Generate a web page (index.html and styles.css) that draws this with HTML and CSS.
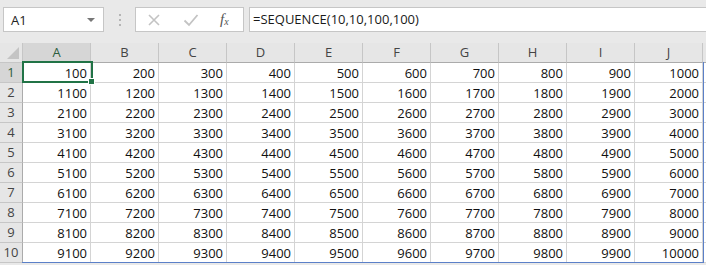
FILE: index.html
```html
<!DOCTYPE html>
<html>
<head>
<meta charset="utf-8">
<link rel="stylesheet" href="styles.css">
</head>
<body>
<div class="bar">
  <div class="namebox"><span class="nm">A1</span><span class="caret"></span></div>
  <div class="dots"><span></span><span></span><span></span></div>
  <div class="fxbox">
    <svg class="ic" width="14" height="14" viewBox="0 0 14 14"><path d="M2 2 L12 12 M12 2 L2 12" stroke="#c3c3c3" stroke-width="1.6" fill="none"/></svg>
    <svg class="ic" width="16" height="14" viewBox="0 0 16 14"><path d="M1.5 7.5 L6 12 L14.5 2" stroke="#c3c3c3" stroke-width="1.8" fill="none"/></svg>
    <span class="fx"><i>f</i><sub>x</sub></span>
  </div>
  <div class="formula">=SEQUENCE(10,10,100,100)</div>
</div>
<div class="sheet">
  <div id="grid" class="grid"></div>
  <div class="spill"></div>
  <div class="sel"><span class="handle"></span></div>
</div>
<script src="app.js"></script>
</body>
</html>
```
FILE: app.js
```js
const g = document.getElementById('grid');
const cols = 'ABCDEFGHIJ'.split('');
let h = '<div class="corner"><span class="tri"></span></div>';
cols.forEach((c, i) => { h += '<div class="ch' + (i === 0 ? ' on' : '') + '">' + c + '</div>'; });
h += '<div class="ch"></div>';
for (let r = 0; r < 10; r++) {
  h += '<div class="rh' + (r === 0 ? ' on' : '') + '">' + (r + 1) + '</div>';
  for (let c = 0; c < 10; c++) {
    h += '<div class="cell">' + (100 + r * 1000 + c * 100) + '</div>';
  }
  h += '<div class="cell"></div>';
}
g.innerHTML = h;
```
FILE: styles.css
```css
html, body { margin: 0; padding: 0; }
body {
  width: 706px; height: 265px; overflow: hidden;
  background: #e9e9e9;
  font-family: "Open Sans", "Noto Sans", sans-serif;
}
.bar {
  height: 43px; box-sizing: border-box; padding-top: 7px;
  display: flex; align-items: flex-start;
}
.namebox {
  margin-left: 3px; width: 101px; height: 25px; box-sizing: border-box;
  background: #fff; border: 1px solid #c6c6c6;
  display: flex; align-items: center; justify-content: space-between;
  padding: 0 8px 0 7px;
}
.nm { font-size: 13px; color: #222; }
.caret { width: 0; height: 0; border-left: 4px solid transparent; border-right: 4px solid transparent; border-top: 4px solid #777; }
.dots {
  width: 31px; height: 25px; display: flex; flex-direction: column;
  align-items: center; justify-content: center; gap: 3px;
}
.dots span { width: 2px; height: 2px; background: #b5b5b5; }
.fxbox {
  width: 109px; height: 25px; box-sizing: border-box;
  background: #fff; border: 1px solid #c6c6c6;
  display: flex; align-items: center; padding-left: 11px;
}
.fxbox .ic { margin-right: 22px; }
.fxbox .ic + .ic { margin-right: 21px; }
.fx { font-family: "Liberation Serif", serif; font-size: 15px; color: #555; }
.fx sub { font-size: 10px; font-style: italic; vertical-align: -1px; }
.formula {
  margin-left: 5px; flex: 1; height: 25px; box-sizing: border-box;
  background: #fff; border: 1px solid #c6c6c6; border-right: 0;
  font-size: 13px; color: #1a1a1a; line-height: 23px; padding-left: 3px;
}
.sheet { position: relative; background: #fff; }
.grid {
  display: grid;
  grid-template-columns: 23px repeat(10, 68px) 1fr;
  grid-auto-rows: 20px;
}
.grid > div { box-sizing: border-box; border-right: 1px solid #d4d4d4; border-bottom: 1px solid #d4d4d4; }
.corner { background: #e6e6e6; position: relative; border-color: #c6c6c6 !important; }
.tri {
  position: absolute; right: 3px; bottom: 3px; width: 0; height: 0;
  border-left: 12px solid transparent; border-bottom: 12px solid #c4c4c4;
}
.ch {
  background: #e6e6e6; text-align: center; font-size: 13px; color: #444;
  line-height: 19px; border-right-color: #c6c6c6 !important; border-bottom-color: #ababab !important;
}
.rh {
  background: #e6e6e6; text-align: center; font-size: 13px; color: #444;
  line-height: 19px; border-right-color: #ababab !important; border-bottom-color: #c6c6c6 !important;
}
.on { background: #d6d6d6; color: #2c5e3e; }
.cell { font-size: 13px; color: #111; text-align: right; padding-right: 3px; line-height: 20px; }
.spill {
  position: absolute; left: 22px; top: 19px; width: 682px; height: 201px;
  box-sizing: border-box; border-right: 1px solid #5b80c8; border-bottom: 1px solid #5b80c8;
  pointer-events: none;
}
.sel {
  position: absolute; left: 22px; top: 18px; width: 71px; height: 22px;
  box-sizing: border-box; border: 2px solid #217346;
}
.handle {
  position: absolute; right: -4px; bottom: -4px; width: 5px; height: 5px;
  background: #217346; border: 1px solid #fff;
}
```
